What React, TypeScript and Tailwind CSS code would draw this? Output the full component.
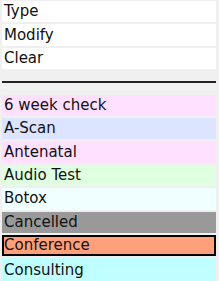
const rows: { label: string; bg: string }[] = [
  { label: "6 week check", bg: "bg-[#ffe0ff]" },
  { label: "A-Scan", bg: "bg-[#dde4ff]" },
  { label: "Antenatal", bg: "bg-[#ffe0ff]" },
  { label: "Audio Test", bg: "bg-[#e0ffe0]" },
  { label: "Botox", bg: "bg-[#f0ffff]" },
  { label: "Cancelled", bg: "bg-[#999999]" },
];

function Item({ label, bg }: { label: string; bg: string }) {
  return (
    <div className={`h-[21.4px] shrink-0 flex items-center pl-[2px] ${bg}`}>{label}</div>
  );
}

export default function App() {
  return (
    <div className="w-[219px] h-[281px] overflow-hidden bg-[#f0f0f0] pt-[1px] pl-[2px] pr-[3px] flex flex-col gap-[2px] text-[15px] leading-none text-[#111] font-['DejaVu_Sans',sans-serif]">
      <Item label="Type" bg="bg-white" />
      <Item label="Modify" bg="bg-white" />
      <Item label="Clear" bg="bg-white" />
      <div className="h-[21.4px] shrink-0 flex items-center">
        <div className="w-full h-[2px] bg-[#222]" />
      </div>
      {rows.map((r) => (
        <Item key={r.label} {...r} />
      ))}
      <div className="h-[21.4px] shrink-0 flex items-center bg-[#ffa07a] border-2 border-black">
        Conference
      </div>
      <div className="h-[24px] shrink-0 flex items-center pl-[2px] bg-[#c0ffff]">Consulting</div>
    </div>
  );
}
